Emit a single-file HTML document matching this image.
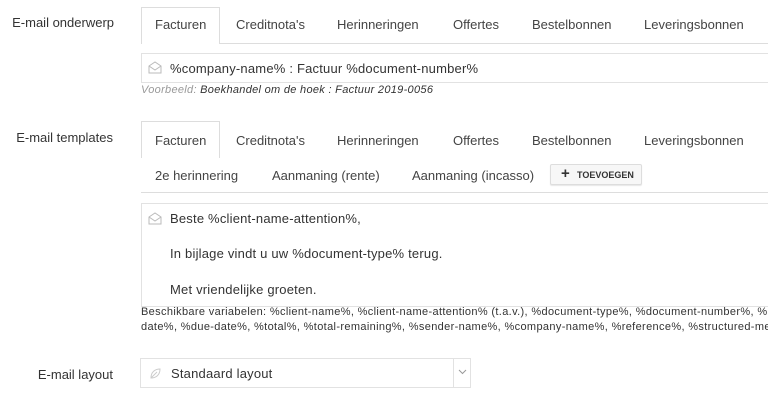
<!DOCTYPE html>
<html><head><meta charset="utf-8"><style>
*{margin:0;padding:0;box-sizing:border-box}
body{width:768px;height:404px;overflow:hidden;background:#fff;font-family:"Liberation Sans",sans-serif;font-size:13px;color:#444;position:relative}
.a{position:absolute;white-space:nowrap}
.lbl{position:absolute;right:655px;color:#333;font-size:13px}
.tabline{position:absolute;left:141px;right:0;border-top:1px solid #ddd}
.act{position:absolute;left:141px;width:79px;border:1px solid #ddd;border-bottom:none;background:#fff}
.box{position:absolute;border:1px solid #e2e2e2;background:#fff}
.btn{position:absolute;left:550px;top:164px;width:92px;height:21px;border:1px solid #ddd;border-radius:2px;background:#f7f7f7;box-shadow:0 1px 1px rgba(0,0,0,.1);font-size:9px;font-weight:bold;color:#333;line-height:20px;padding-left:26px}
</style></head><body>
<div class="lbl" style="top:15px;right:654px">E-mail onderwerp</div>
<div class="act" style="top:7px;height:37px"></div>
<div class="tabline" style="top:43px;left:220px"></div>
<div class="a" style="left:155px;top:17px">Facturen</div>
<div class="a" style="left:236px;top:17px">Creditnota's</div>
<div class="a" style="left:337px;top:17px">Herinneringen</div>
<div class="a" style="left:453px;top:17px">Offertes</div>
<div class="a" style="left:532px;top:17px">Bestelbonnen</div>
<div class="a" style="left:644px;top:17px">Leveringsbonnen</div>
<div class="box" style="left:141px;top:53px;width:640px;height:30px"></div>
<svg class="a" style="left:148px;top:61px" width="14" height="13" viewBox="0 0 14 13"><path d="M1 5L7 1L13 5V12H1Z M1 5L7 9L13 5" fill="none" stroke="#bbb" stroke-width="1"/></svg>
<div class="a" style="left:170px;top:61px;color:#333;letter-spacing:.2px">%company-name% : Factuur %document-number%</div>
<div class="a" style="left:141px;top:84px;font-size:11px;letter-spacing:.3px;font-style:italic;color:#333"><span style="color:#999">Voorbeeld:</span> Boekhandel om de hoek : Factuur 2019-0056</div>

<div class="lbl" style="top:130px">E-mail templates</div>
<div class="act" style="top:121px;height:37px"></div>
<div class="a" style="left:155px;top:133px">Facturen</div>
<div class="a" style="left:236px;top:133px">Creditnota's</div>
<div class="a" style="left:337px;top:133px">Herinneringen</div>
<div class="a" style="left:453px;top:133px">Offertes</div>
<div class="a" style="left:532px;top:133px">Bestelbonnen</div>
<div class="a" style="left:644px;top:133px">Leveringsbonnen</div>
<div class="a" style="left:155px;top:168px">2e herinnering</div>
<div class="a" style="left:272px;top:168px">Aanmaning (rente)</div>
<div class="a" style="left:412px;top:168px">Aanmaning (incasso)</div>
<div class="btn"><span style="position:absolute;left:10px;top:-1px;font-size:15px">+</span>TOEVOEGEN</div>
<div class="tabline" style="top:192px"></div>
<div class="box" style="left:141px;top:203px;width:640px;height:104px"></div>
<svg class="a" style="left:148px;top:212px" width="14" height="13" viewBox="0 0 14 13"><path d="M1 5L7 1L13 5V12H1Z M1 5L7 9L13 5" fill="none" stroke="#bbb" stroke-width="1"/></svg>
<div class="a" style="left:170px;top:211px;color:#333;letter-spacing:.2px">Beste %client-name-attention%,</div>
<div class="a" style="left:170px;top:246px;color:#333;letter-spacing:.2px">In bijlage vindt u uw %document-type% terug.</div>
<div class="a" style="left:170px;top:282px;color:#333;letter-spacing:.2px">Met vriendelijke groeten.</div>
<div class="a" style="left:141px;top:305px;font-size:11px;letter-spacing:.35px;line-height:15px;color:#333">Beschikbare variabelen: %client-name%, %client-name-attention% (t.a.v.), %document-type%, %document-number%, %<br>date%, %due-date%, %total%, %total-remaining%, %sender-name%, %company-name%, %reference%, %structured-me</div>

<div class="lbl" style="top:367px">E-mail layout</div>
<div class="box" style="left:140px;top:358px;width:331px;height:30px"></div>
<div class="a" style="left:453px;top:359px;height:28px;border-left:1px solid #e2e2e2"></div>
<svg class="a" style="left:458px;top:369px" width="9" height="6" viewBox="0 0 9 6"><path d="M1 1L4.5 4.5L8 1" fill="none" stroke="#999"/></svg>
<svg class="a" style="left:149px;top:367px" width="13" height="13" viewBox="0 0 13 13"><path d="M2 11C2 5 6 2 11 2C11 8 7 11 2 11ZM2 11L8 5" fill="none" stroke="#ccc"/></svg>
<div class="a" style="left:171px;top:366px;color:#333;letter-spacing:.2px">Standaard layout</div>
</body></html>
